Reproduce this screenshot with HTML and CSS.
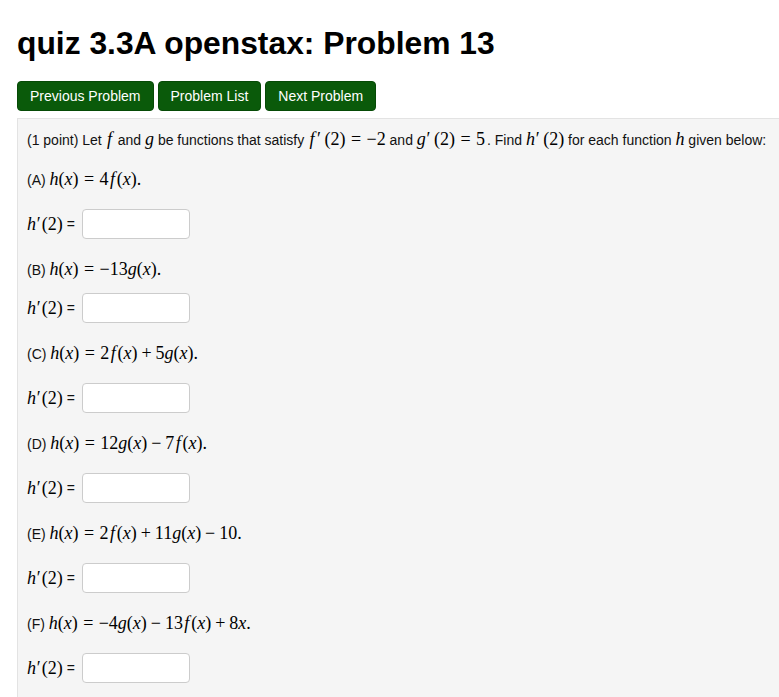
FILE: index.html
```html
<!DOCTYPE html>
<html>
<head>
<meta charset="utf-8">
<link rel="stylesheet" href="styles.css">
</head>
<body>
<h1 class="title">quiz 3.3A openstax: Problem 13</h1>
<div class="nav">
  <a class="btn">Previous Problem</a>
  <a class="btn">Problem List</a>
  <a class="btn">Next Problem</a>
</div>
<div class="panel">
  <p class="row">(1 point) Let <span class="m"><i class="f">f</i></span> and <span class="m"><i>g</i></span> be functions that satisfy <span class="m"><i class="f">f</i><span class="pr">′</span>(2)<span class="op">=</span>−2</span> and <span class="m"><i>g</i><span class="pr">′</span>(2)<span class="op">=</span>5</span><span class="dot">.</span> Find <span class="m"><i>h</i><span class="pr">′</span>(2)</span> for each function <span class="m"><i>h</i></span> given below:</p>

  <p class="row">(A) <span class="m"><i>h</i>(<i>x</i>)<span class="op">=</span>4<i class="f">f</i>(<i>x</i>).</span></p>
  <p class="ans"><span class="m"><i>h</i><span class="pr">′</span>(2)</span> = <span class="box"></span></p>

  <p class="row">(B) <span class="m"><i>h</i>(<i>x</i>)<span class="op">=</span>−13<i>g</i>(<i>x</i>).</span></p>
  <p class="ans ans-tight"><span class="m"><i>h</i><span class="pr">′</span>(2)</span> = <span class="box"></span></p>

  <p class="row">(C) <span class="m"><i>h</i>(<i>x</i>)<span class="op">=</span>2<i class="f">f</i>(<i>x</i>)<span class="bin">+</span>5<i>g</i>(<i>x</i>).</span></p>
  <p class="ans"><span class="m"><i>h</i><span class="pr">′</span>(2)</span> = <span class="box"></span></p>

  <p class="row">(D) <span class="m"><i>h</i>(<i>x</i>)<span class="op">=</span>12<i>g</i>(<i>x</i>)<span class="bin">−</span>7<i class="f">f</i>(<i>x</i>).</span></p>
  <p class="ans"><span class="m"><i>h</i><span class="pr">′</span>(2)</span> = <span class="box"></span></p>

  <p class="row">(E) <span class="m"><i>h</i>(<i>x</i>)<span class="op">=</span>2<i class="f">f</i>(<i>x</i>)<span class="bin">+</span>11<i>g</i>(<i>x</i>)<span class="bin">−</span>10.</span></p>
  <p class="ans"><span class="m"><i>h</i><span class="pr">′</span>(2)</span> = <span class="box"></span></p>

  <p class="row">(F) <span class="m"><i>h</i>(<i>x</i>)<span class="op">=</span>−4<i>g</i>(<i>x</i>)<span class="bin">−</span>13<i class="f">f</i>(<i>x</i>)<span class="bin">+</span>8<i>x</i>.</span></p>
  <p class="ans"><span class="m"><i>h</i><span class="pr">′</span>(2)</span> = <span class="box"></span></p>
</div>
</body>
</html>
```
FILE: styles.css
```css
html { overflow: hidden; }
body {
  margin: 0;
  padding: 0 0 0 17px;
  font-family: "Liberation Sans", Arial, sans-serif;
  font-size: 14px;
  color: #111;
  background: #fff;
}
.title {
  margin: 24px 0 0 0;
  font-size: 31.8px;
  line-height: 38px;
  font-weight: bold;
  color: #000;
}
.nav {
  display: flex;
  gap: 4px;
  margin-top: 19px;
}
.btn {
  display: block;
  height: 30px;
  box-sizing: border-box;
  padding: 0 12px;
  line-height: 28px;
  background: #0a5a0a;
  border: 1px solid #064a06;
  border-radius: 4px;
  color: #fff;
  font-size: 14px;
}
.panel {
  margin-top: 7px;
  margin-right: -40px;
  background: #f5f5f5;
  border: 1px solid #e3e3e3;
  padding: 10px 10px 40px 9px;
}
.row {
  margin: 0 0 20px 0;
  line-height: 20px;
  height: 20px;
  white-space: nowrap;
}
.ans {
  margin: 0 0 20px 0;
  height: 30px;
  display: flex;
  align-items: center;
}
.ans-tight { margin-top: -6px; }
.ans .m { margin-right: 4px; }
.m {
  font-family: "Liberation Serif", "Times New Roman", serif;
  font-size: 18px;
  color: #000;
}
.m i { font-style: italic; }
.m .f { margin: 0 0.1em 0 0.08em; }
.pr { margin: 0 0.2em 0 0.04em; }
.ans .pr { margin: 0 0.06em 0 0.04em; }
.op { margin: 0 0.3em; }
.bin { margin: 0 0.22em; }
.dot { margin-left: 2px; }
.box {
  display: block;
  width: 108px;
  height: 30px;
  box-sizing: border-box;
  margin-left: 7px;
  background: #fff;
  border: 1px solid #cccccc;
  border-radius: 4px;
}
```
